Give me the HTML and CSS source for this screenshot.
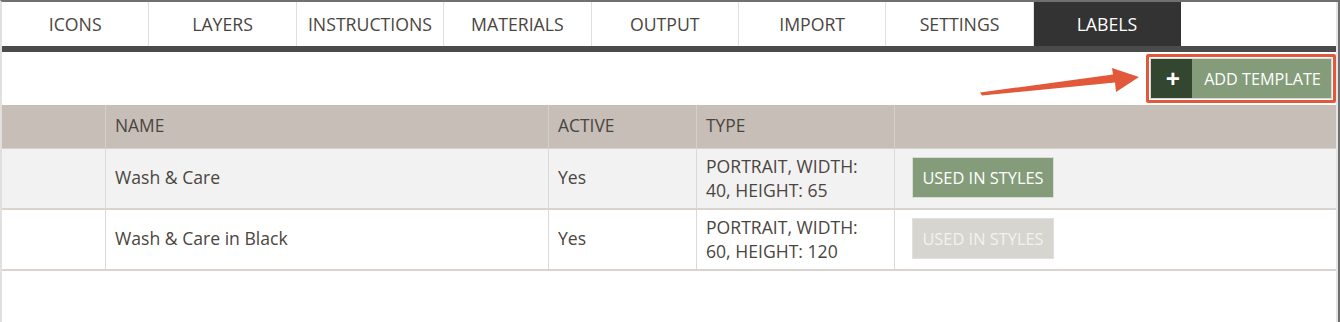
FILE: index.html
```html
<!DOCTYPE html>
<html>
<head>
<meta charset="utf-8">
<link rel="stylesheet" href="styles.css">
</head>
<body>
<div class="frame">
  <div class="inner">
    <nav class="tabs">
      <div class="tab">ICONS</div>
      <div class="tab">LAYERS</div>
      <div class="tab">INSTRUCTIONS</div>
      <div class="tab">MATERIALS</div>
      <div class="tab">OUTPUT</div>
      <div class="tab">IMPORT</div>
      <div class="tab">SETTINGS</div>
      <div class="tab active">LABELS</div>
    </nav>
    <div class="tabbar"></div>
    <div class="toolbar">
      <svg class="arrow" width="170" height="40" viewBox="975 60 170 40">
        <polygon fill="#e2583a" points="980,92.5 1113,74.5 1112,68 1139,77 1116,92 1115,82.5 982,95.5"/>
      </svg>
      <div class="highlight">
        <button class="add-btn"><span class="plus">+</span><span class="add-label">ADD TEMPLATE</span></button>
      </div>
    </div>
    <div class="table">
      <div class="row head">
        <div class="cell"></div>
        <div class="cell">NAME</div>
        <div class="cell">ACTIVE</div>
        <div class="cell">TYPE</div>
        <div class="cell"></div>
      </div>
      <div class="row odd">
        <div class="cell"></div>
        <div class="cell">Wash &amp; Care</div>
        <div class="cell">Yes</div>
        <div class="cell type">PORTRAIT, WIDTH:<br>40, HEIGHT: 65</div>
        <div class="cell"><span class="used">USED IN STYLES</span></div>
      </div>
      <div class="row">
        <div class="cell"></div>
        <div class="cell">Wash &amp; Care in Black</div>
        <div class="cell">Yes</div>
        <div class="cell type">PORTRAIT, WIDTH:<br>60, HEIGHT: 120</div>
        <div class="cell"><span class="used disabled">USED IN STYLES</span></div>
      </div>
    </div>
  </div>
</div>
</body>
</html>
```

FILE: styles.css
```css
* { box-sizing: border-box; }
html, body { margin: 0; padding: 0; }
body {
  width: 1340px;
  height: 322px;
  overflow: hidden;
  background: #fff;
  font-family: "Open Sans", "Liberation Sans", sans-serif;
  color: #4a4541;
}
.frame {
  height: 322px;
  border-top: 2px solid #707070;
  border-left: 2px solid #e2e0de;
  border-right: 2px solid #6f6f6f;
}
.inner {
  height: 100%;
  border-right: 2px solid #e4e4e4;
}
.tabs {
  display: flex;
  height: 44px;
}
.tab {
  flex: 0 0 147.4px;
  border-right: 1px solid #e2e0de;
  display: flex;
  align-items: center;
  justify-content: center;
  font-size: 17.7px;
  color: #4a4541;
  padding-bottom: 1px;
}
.tab.active {
  background: #333333;
  color: #ffffff;
  border-right-color: #333333;
}
.tabbar {
  height: 6px;
  background: #4b4b4b;
}
.toolbar {
  position: relative;
  height: 53px;
  display: flex;
  justify-content: flex-end;
  padding-top: 2px;
}
.arrow {
  position: absolute;
  left: 973px;
  top: 8px;
}
.highlight {
  border: 3px solid #e2583a;
  border-radius: 2px;
  padding: 1px;
  height: 49px;
  width: 190px;
  background: #fff;
}
.add-btn {
  display: flex;
  height: 100%;
  width: 100%;
  border: 1px solid #d8d8d8;
  padding: 0;
  margin: 0;
  font-family: inherit;
  background: #849c79;
}
.plus {
  width: 41px;
  height: 100%;
  background: #334630;
  color: #fff;
  font-size: 25px;
  font-weight: 700;
  display: flex;
  align-items: center;
  justify-content: center;
  line-height: 1;
  padding-left: 3px;
}
.add-label {
  flex: 1;
  display: flex;
  align-items: center;
  justify-content: center;
  color: #fff;
  font-size: 16.2px;
  padding-left: 2px;
}
.table {
  width: 1334px;
}
.row {
  display: grid;
  grid-template-columns: 104px 443px 148px 198px 1fr;
  height: 61px;
  border-bottom: 2px solid #dad4cf;
  background: #fff;
}
.row.head {
  height: 44px;
  background: #c6beb7;
  border-bottom: 1px solid #d7d2cc;
}
.row.odd { background: #f2f2f2; }
.cell {
  display: flex;
  align-items: center;
  padding-left: 9px;
  padding-bottom: 3px;
  font-size: 17.6px;
  border-right: 1px solid #dcd8d4;
  line-height: 24px;
}
.head .cell {
  border-right-color: #d5cfca;
  font-size: 17.4px;
  padding-bottom: 3px;
}
.cell:last-child { border-right: none; }
.cell.type { font-size: 17.6px; padding-bottom: 2px; }
.row .cell:last-child { padding-left: 17px; padding-bottom: 2px; }
.used {
  display: inline-flex;
  align-items: center;
  justify-content: center;
  width: 142px;
  height: 41px;
  background: #849c79;
  color: #fff;
  font-size: 16.4px;
  border: 1px solid #d9ddd5;
}
.used.disabled {
  background: #d7d5d0;
  color: #f3f2ef;
  border-color: #e2e0dc;
}
```
